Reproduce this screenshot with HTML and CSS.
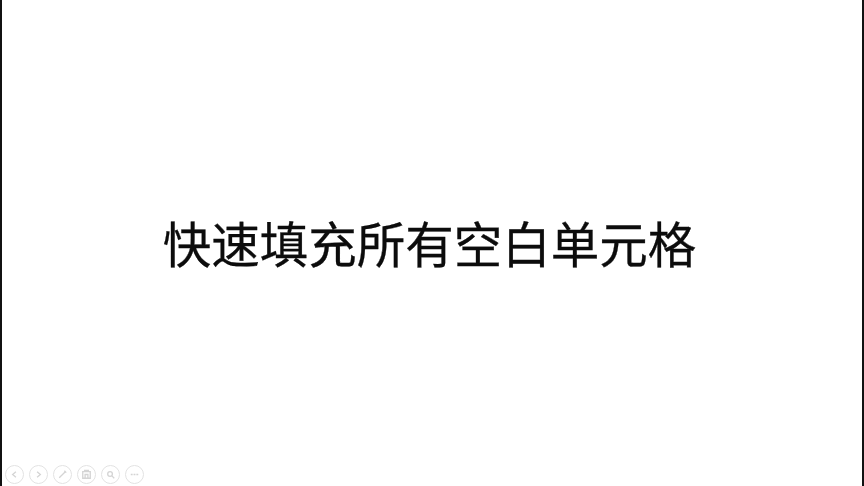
FILE: index.html
```html
<!DOCTYPE html>
<html lang="zh">
<head>
<meta charset="utf-8">
<title>快速填充所有空白单元格</title>
<link rel="stylesheet" href="styles.css">
</head>
<body>
<main class="slide">
  <h1 class="title">快速填充所有空白单元格</h1>
  <nav class="controls">
    <span class="control"><svg viewBox="0 0 16 16"><path d="M9.500 5 6 8l3.500 3"/></svg></span>
    <span class="control"><svg viewBox="0 0 16 16"><path d="M6.500 5 10 8l-3.500 3"/></svg></span>
    <span class="control"><svg viewBox="0 0 16 16"><path d="M4.500 11.500 11 5M10 4l2 2"/></svg></span>
    <span class="control"><svg viewBox="0 0 16 16"><path d="M4 5h8v7H4zM6 5V3.500h4V5M6.500 8h3v4h-3z"/></svg></span>
    <span class="control"><svg viewBox="0 0 16 16"><circle cx="7.500" cy="7.500" r="2.500"/><path d="m9.500 9.500 2.500 2.500"/></svg></span>
    <span class="control"><svg viewBox="0 0 16 16"><path class="dots" d="M4 8h2M7 8h2M10 8h2"/></svg></span>
  </nav>
</main>
</body>
</html>
```

FILE: styles.css
```css
html, body {
  margin: 0;
  height: 100%;
  background: #fff;
}
.slide {
  position: relative;
  box-sizing: border-box;
  height: 486px;
  border-left: 2px solid #111;
  border-right: 2px solid #111;
  display: flex;
  justify-content: center;
  padding-top: 213px;
  padding-right: 5px;
  overflow: hidden;
}
.title {
  margin: 0;
  font-family: "Noto Sans CJK SC", "Liberation Sans", sans-serif;
  font-size: 48.5px;
  line-height: 58px;
  font-weight: 400;
  color: #0c0c0c;
  -webkit-text-stroke: 0.3px #0c0c0c;
  white-space: nowrap;
  filter: blur(0.3px);
}
.controls {
  position: absolute;
  left: 3px;
  bottom: 2px;
  display: flex;
  gap: 5px;
  filter: blur(0.5px);
}
.control {
  width: 19px;
  height: 19px;
  box-sizing: border-box;
  border: 1px solid #e2e2e2;
  border-radius: 50%;
  display: flex;
  align-items: center;
  justify-content: center;
}
.control svg {
  width: 15px;
  height: 15px;
  fill: none;
  stroke: #d4d4d4;
  stroke-width: 1.4;
}
.control .dots {
  stroke-width: 1.400;
}
```
